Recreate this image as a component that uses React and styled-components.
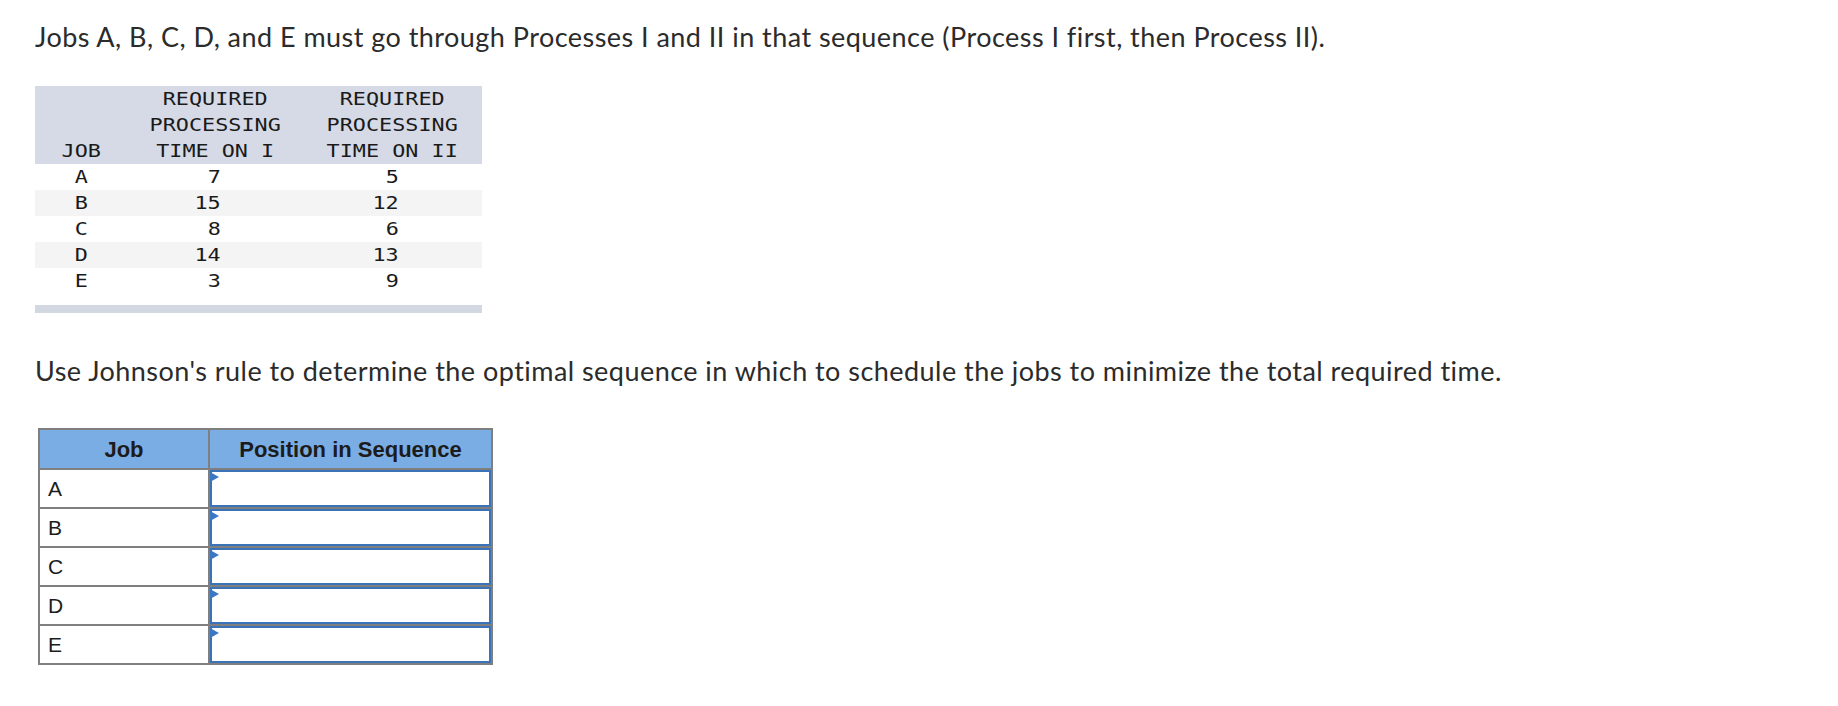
import React from "react";
import styled, { createGlobalStyle } from "styled-components";

const Global = createGlobalStyle`
  html, body { margin: 0; padding: 0; background: #ffffff; }
  body { font-family: "Lato", "Liberation Sans", sans-serif; }
`;

const Page = styled.div`
  display: flex;
  flex-direction: column;
  align-items: flex-start;
  padding: 21px 0 0 35px;
`;

const Prompt = styled.p`
  margin: ${(p) => p.$top || 0}px 0 0 0;
  font-family: "Lato", "Liberation Sans", sans-serif;
  font-size: 27px;
  letter-spacing: 0.46px;
  line-height: 31px;
  color: #2b2b2b;
  white-space: nowrap;
`;

const DataTable = styled.div`
  margin-top: 34px;
  width: 447px;
  display: flex;
  flex-direction: column;
  font-family: "DejaVu Sans Mono", "Liberation Mono", monospace;
  font-size: 18px;
  color: #1a1a1a;
`;

const DataRow = styled.div`
  display: grid;
  grid-template-columns: 93px 174px 180px;
  height: ${(p) => (p.$head ? "78px" : "26px")};
  box-sizing: border-box;
  align-items: end;
  background: ${(p) => (p.$head ? "#d6dae6" : p.$shade ? "#f4f4f4" : "#ffffff")};
`;

const DataCell = styled.div`
  text-align: ${(p) => (p.$num ? "right" : "center")};
  padding-right: ${(p) => p.$pr || 0}px;
  line-height: 26px;
`;

const Stretch = styled.span`
  display: inline-block;
  transform: scaleX(1.21);
  transform-origin: ${(p) => (p.$right ? "right center" : "center center")};
`;

const Spacer = styled.div`
  height: 11px;
`;

const Bar = styled.div`
  height: 8px;
  background: #d2d7e1;
`;

const AnswerGrid = styled.div`
  margin: 42px 0 0 3px;
  display: grid;
  grid-template-columns: 168px 281px;
  grid-template-rows: 38px repeat(5, 37px);
  gap: 2px;
  padding: 2px;
  background: #7f7f7f;
  font-family: "Liberation Sans", Arial, sans-serif;
`;

const HeadCell = styled.div`
  background: #7aade3;
  display: flex;
  align-items: center;
  justify-content: center;
  padding-top: 2px;
  font-weight: bold;
  font-size: 22px;
  color: #1c1c1c;
`;

const JobCell = styled.div`
  background: #ffffff;
  display: flex;
  align-items: center;
  padding-left: 8px;
  font-size: 21px;
  color: #1c1c1c;
`;

const AnswerCell = styled.div`
  position: relative;
  background: #ffffff;
  border: 2px solid #3b73b9;
  box-sizing: border-box;

  &::before {
    content: "";
    position: absolute;
    left: -2px;
    top: 0;
    width: 0;
    height: 0;
    border-left: 9px solid #3a78c4;
    border-top: 5px solid transparent;
    border-bottom: 5px solid transparent;
  }
`;

const rows = [
  ["A", 7, 5],
  ["B", 15, 12],
  ["C", 8, 6],
  ["D", 14, 13],
  ["E", 3, 9],
];

export default function App() {
  return (
    <>
      <Global />
      <Page>
        <Prompt>
          Jobs A, B, C, D, and E must go through Processes I and II in that sequence (Process I first, then Process II).
        </Prompt>

        <DataTable>
          <DataRow $head>
            <DataCell>
              <Stretch>JOB</Stretch>
            </DataCell>
            <DataCell>
              <Stretch>
                REQUIRED
                <br />
                PROCESSING
                <br />
                TIME ON I
              </Stretch>
            </DataCell>
            <DataCell>
              <Stretch>
                REQUIRED
                <br />
                PROCESSING
                <br />
                TIME ON II
              </Stretch>
            </DataCell>
          </DataRow>
          {rows.map(([job, a, b], i) => (
            <DataRow key={job} $shade={i % 2 === 1}>
              <DataCell>
                <Stretch>{job}</Stretch>
              </DataCell>
              <DataCell $num $pr={81}>
                <Stretch $right>{a}</Stretch>
              </DataCell>
              <DataCell $num $pr={83}>
                <Stretch $right>{b}</Stretch>
              </DataCell>
            </DataRow>
          ))}
          <Spacer />
          <Bar />
        </DataTable>

        <Prompt $top={42}>
          Use Johnson's rule to determine the optimal sequence in which to schedule the jobs to minimize the total required time.
        </Prompt>

        <AnswerGrid>
          <HeadCell>Job</HeadCell>
          <HeadCell>Position in Sequence</HeadCell>
          {rows.map(([job]) => (
            <React.Fragment key={job}>
              <JobCell>{job}</JobCell>
              <AnswerCell />
            </React.Fragment>
          ))}
        </AnswerGrid>
      </Page>
    </>
  );
}
